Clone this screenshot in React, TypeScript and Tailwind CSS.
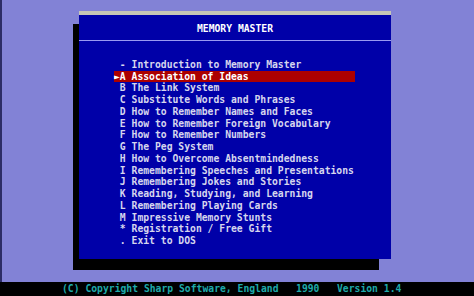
import React from 'react';

const items: [string, string][] = [
  ['-', 'Introduction to Memory Master'],
  ['A', 'Association of Ideas'],
  ['B', 'The Link System'],
  ['C', 'Substitute Words and Phrases'],
  ['D', 'How to Remember Names and Faces'],
  ['E', 'How to Remember Foreign Vocabulary'],
  ['F', 'How to Remember Numbers'],
  ['G', 'The Peg System'],
  ['H', 'How to Overcome Absentmindedness'],
  ['I', 'Remembering Speeches and Presentations'],
  ['J', 'Remembering Jokes and Stories'],
  ['K', 'Reading, Studying, and Learning'],
  ['L', 'Remembering Playing Cards'],
  ['M', 'Impressive Memory Stunts'],
  ['*', 'Registration / Free Gift'],
  ['.', 'Exit to DOS'],
];

const App: React.FC = () => {
  const selected = 1;
  return (
    <div
      className="w-[474px] h-[296px] bg-[#8282d6] overflow-hidden flex flex-col text-[9.72px] leading-[11.75px] font-bold"
      style={{ fontFamily: '"DejaVu Sans Mono", "Liberation Mono", monospace' }}
    >
      <div className="flex-1 border-l-2 border-[#2c2c66] pt-[11px] pl-[71px]">
        {/* dialog + shadow */}
        <div className="flex">
          <div className="w-[6px] mt-[13px] bg-black"></div>
          <div className="w-[312px]">
            <div className="h-[4px] bg-[#c6c6b6]"></div>
            <div className="h-[244px] bg-[#0000a8] pt-[8px]">
              <div className="text-center text-white">MEMORY MASTER</div>
              <div className="mt-[5px] h-px bg-[#9a9af2]"></div>
              <div className="mt-[18px] pl-[35px]">
                {items.map(([key, label], i) => (
                  <div key={i} className="flex">
                    <div
                      className={
                        'w-[241px] whitespace-pre ' +
                        (i === selected ? 'bg-[#ac0000] text-white' : 'text-[#d6d6ee]')
                      }
                    >
                      {(i === selected ? '\u25BA' : ' ') + key + ' ' + label}
                    </div>
                  </div>
                ))}
              </div>
            </div>
          </div>
        </div>
        <div className="w-[306px] h-[11px] bg-black"></div>
      </div>
      {/* status line */}
      <div className="h-[14px] bg-black pl-[62px] pt-[1px] text-[#1eaaaa] whitespace-pre">
        {'(C) Copyright Sharp Software, England   1990   Version 1.4'}
      </div>
    </div>
  );
};

export default App;
